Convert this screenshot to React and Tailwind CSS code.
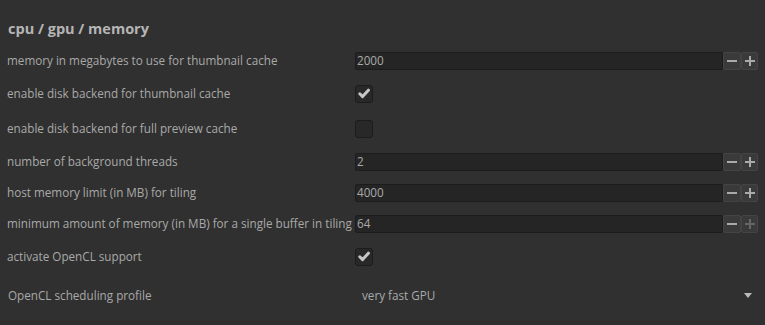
import React from "react";

const font = { fontFamily: '"Open Sans", "DejaVu Sans", sans-serif' };

function Spin({ value, dimPlus }) {
  return (
    <div className="flex items-center h-[18px]">
      <div className="w-[368px] h-[18px] bg-[#252525] border border-[#1c1c1c] rounded-[2px] flex items-center pl-[1px] text-[#a9a9a9] text-[11.7px]">
        {value}
      </div>
      <div className="w-[18px] h-[18px] bg-[#3a3a3a] border border-[#444] rounded-[2px] flex items-center justify-center">
        <div className="w-[10px] h-[2px] bg-[#aaa]" />
      </div>
      <div className="w-[17px] h-[18px] bg-[#3a3a3a] border border-[#444] rounded-[2px] flex items-center justify-center relative">
        <div className={"w-[10px] h-[2px] " + (dimPlus ? "bg-[#666]" : "bg-[#aaa]")} />
        <div className={"absolute w-[2px] h-[10px] " + (dimPlus ? "bg-[#666]" : "bg-[#aaa]")} />
      </div>
    </div>
  );
}

function Check({ checked }) {
  return (
    <div className="w-[18px] h-[18px] bg-[#282828] border border-[#1c1c1c] rounded-[3px] flex items-center justify-center">
      {checked && (
        <svg width="12" height="11" viewBox="0 0 12 11">
          <path d="M1.8 5.8 L4.6 8.6 L10.4 2.2" stroke="#c6c6c6" strokeWidth="3" fill="none" strokeLinecap="round" strokeLinejoin="round" />
        </svg>
      )}
    </div>
  );
}

function Row({ label, h, children }) {
  return (
    <div className="flex items-center" style={{ height: h }}>
      <div className="w-[348px] shrink-0 text-[11.7px] text-[#a9a9a9] whitespace-nowrap">{label}</div>
      <div className="flex-1 flex items-center">{children}</div>
    </div>
  );
}

export default function App() {
  return (
    <div className="w-[765px] h-[325px] bg-[#303030] pl-[7px] overflow-hidden" style={font}>
      <div className="h-[45px] flex items-center pt-[12px] pl-[1px] text-[14.5px] font-bold text-[#b5b5b5]">cpu / gpu / memory</div>
      <Row label="memory in megabytes to use for thumbnail cache" h={31}>
        <Spin value="2000" />
      </Row>
      <Row label="enable disk backend for thumbnail cache" h={35}>
        <Check checked />
      </Row>
      <Row label="enable disk backend for full preview cache" h={35}>
        <Check />
      </Row>
      <Row label="number of background threads" h={31}>
        <Spin value="2" />
      </Row>
      <Row label="host memory limit (in MB) for tiling" h={31}>
        <Spin value="4000" />
      </Row>
      <Row label="minimum amount of memory (in MB) for a single buffer in tiling" h={31}>
        <Spin value="64" dimPlus />
      </Row>
      <Row label="activate OpenCL support" h={35}>
        <Check checked />
      </Row>
      <div className="flex items-center h-[43px]">
        <div className="w-[355px] shrink-0 text-[11.7px] text-[#a9a9a9] pl-[1px]">OpenCL scheduling profile</div>
        <div className="w-[390px] flex items-center justify-between text-[11.7px] text-[#a9a9a9]">
          <span>very fast GPU</span>
          <svg width="8" height="5" viewBox="0 0 8 5"><path d="M0 0 H8 L4 5 Z" fill="#bbb" /></svg>
        </div>
      </div>
    </div>
  );
}
